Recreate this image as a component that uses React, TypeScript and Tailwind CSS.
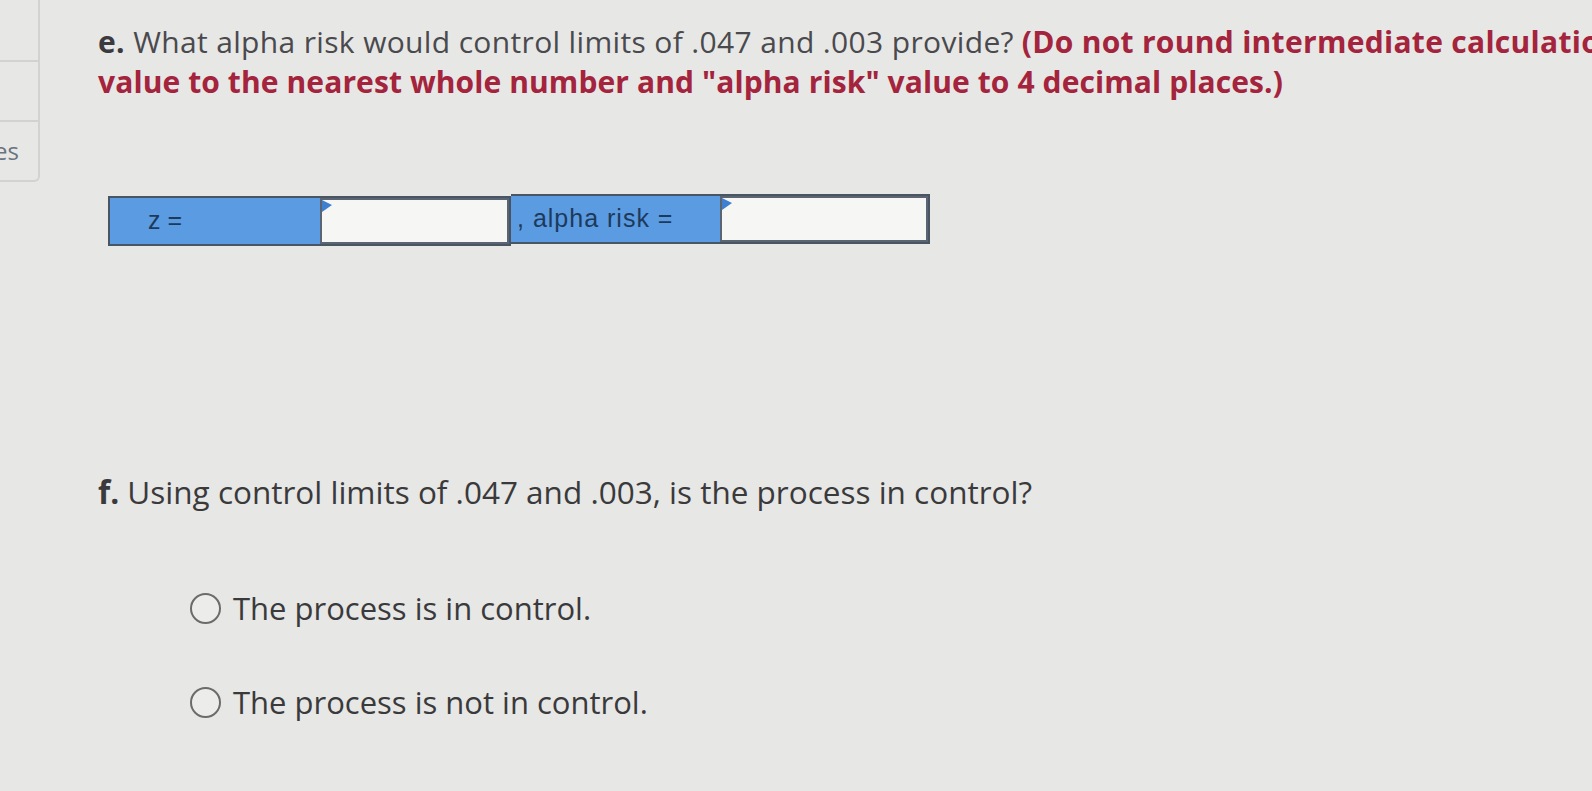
import React from "react";

function Flag() {
  return (
    <svg className="absolute left-0 top-0" width="10" height="12" viewBox="0 0 10 12">
      <polygon points="0,0 10,5 0,12" fill="#3f7fd0" />
    </svg>
  );
}

function Radio({ label }: { label: string }) {
  return (
    <div className="flex items-center gap-[12px]">
      <span className="w-[31px] h-[31px] shrink-0 rounded-full border-[2.5px] border-[#6b6b6b] bg-[#ececea]" />
      <span className="text-[31px] leading-[36px] text-[#3a3a3c]">{label}</span>
    </div>
  );
}

export default function App() {
  return (
    <div
      className="w-[1592px] h-[791px] overflow-hidden bg-[#e7e7e5] relative flex"
      style={{ fontFamily: "'Open Sans', Lato, sans-serif" }}
    >
      <div className="w-[40px] shrink-0 flex flex-col">
        <div className="h-[62px] border-r-2 border-b-2 border-[#d2d2d0]" />
        <div className="h-[60px] border-r-2 border-b-2 border-[#d2d2d0]" />
        <div className="h-[60px] border-r-2 border-b-2 border-[#d2d2d0] rounded-br-[6px] flex items-center">
          <span className="text-[24px] text-[#6a7380] -ml-[6px] leading-none">es</span>
        </div>
      </div>
      <div className="pl-[58px] pt-[22px] flex flex-col">
        <div className="text-[30px] leading-[40px] whitespace-nowrap">
          <div className="text-[#4a4a4e]">
            <span className="tracking-[0.35px]">
              <b className="text-[#3a3a40]">e.</b> What alpha risk would control limits of .047 and .003 provide?
            </span>{" "}
            <b className="text-[#a3243c] tracking-[0.3px]">(Do not round intermediate calculations. Round "z"</b>
          </div>
          <div className="font-bold text-[#a3243c] tracking-[0.1px]">
            value to the nearest whole number and "alpha risk" value to 4 decimal places.)
          </div>
        </div>
        <div className="mt-[92px] ml-[10px] flex items-start shrink-0" style={{ fontFamily: "'Liberation Sans', Arial, sans-serif" }}>
          <div className="flex shrink-0 h-[50px] border-2 border-[#4a5564] mt-[2px]">
            <div className="w-[210px] shrink-0 bg-[#5b9be2] flex items-center pl-[38px] text-[25px] text-[#1d3a5a]">z =</div>
            <div className="w-[189px] shrink-0 bg-[#f6f6f4] border-2 border-[#5a6472] relative">
              <Flag />
            </div>
          </div>
          <div className="flex shrink-0 h-[50px] border-2 border-l-0 border-[#4a5564]">
            <div className="w-[209px] shrink-0 bg-[#5b9be2] flex items-center pl-[6px] text-[25px] tracking-[1px] text-[#1d3a5a]">, alpha risk =</div>
            <div className="w-[208px] shrink-0 bg-[#f6f6f4] border-2 border-[#5a6472] relative">
              <Flag />
            </div>
          </div>
        </div>
        <div className="mt-[226px] text-[31.5px] leading-[40px] text-[#3a3a3c] whitespace-nowrap">
          <b>f.</b> Using control limits of .047 and .003, is the process in control?
        </div>
        <div className="ml-[92px] mt-[78px] flex flex-col gap-[58px]">
          <Radio label="The process is in control." />
          <Radio label="The process is not in control." />
        </div>
      </div>
    </div>
  );
}
